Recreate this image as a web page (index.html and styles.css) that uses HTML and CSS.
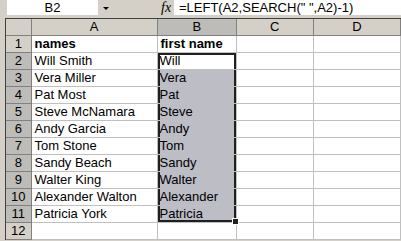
FILE: index.html
```html
<!DOCTYPE html>
<html lang="en">
<head>
    <title>names</title>
    <link rel="stylesheet" href="styles.css">
</head>

<body>
    <div class="formula_bar">
        <div class="name_box">B2</div>
        <div class="drop"></div>
        <div class="fx">fx</div>
        <div class="formula">=LEFT(A2,SEARCH(" ",A2)-1)</div>
    </div>

    <table class="sheet">
        <tr class="col_head">
            <th class="corner"></th>
            <th class="col_a">A</th>
            <th class="col_b on">B</th>
            <th class="col_c">C</th>
            <th class="col_d">D</th>
        </tr>
        <tr>
            <th class="row_head">1</th>
            <td class="bold">names</td>
            <td class="bold">first name</td>
            <td></td><td></td>
        </tr>
        <tr>
            <th class="row_head on">2</th>
            <td>Will Smith</td>
            <td class="sel active first">Will</td>
            <td></td><td></td>
        </tr>
        <tr>
            <th class="row_head on">3</th>
            <td>Vera Miller</td>
            <td class="sel">Vera</td>
            <td></td><td></td>
        </tr>
        <tr>
            <th class="row_head on">4</th>
            <td>Pat Most</td>
            <td class="sel">Pat</td>
            <td></td><td></td>
        </tr>
        <tr>
            <th class="row_head on">5</th>
            <td>Steve McNamara</td>
            <td class="sel">Steve</td>
            <td></td><td></td>
        </tr>
        <tr>
            <th class="row_head on">6</th>
            <td>Andy Garcia</td>
            <td class="sel">Andy</td>
            <td></td><td></td>
        </tr>
        <tr>
            <th class="row_head on">7</th>
            <td>Tom Stone</td>
            <td class="sel">Tom</td>
            <td></td><td></td>
        </tr>
        <tr>
            <th class="row_head on">8</th>
            <td>Sandy Beach</td>
            <td class="sel">Sandy</td>
            <td></td><td></td>
        </tr>
        <tr>
            <th class="row_head on">9</th>
            <td>Walter King</td>
            <td class="sel">Walter</td>
            <td></td><td></td>
        </tr>
        <tr>
            <th class="row_head on">10</th>
            <td>Alexander Walton</td>
            <td class="sel">Alexander</td>
            <td></td><td></td>
        </tr>
        <tr>
            <th class="row_head on">11</th>
            <td>Patricia York</td>
            <td class="sel last">Patricia<span class="handle"></span></td>
            <td></td><td></td>
        </tr>
        <tr>
            <th class="row_head">12</th>
            <td></td><td></td><td></td><td></td>
        </tr>
    </table>
</body>

</html>
```

FILE: styles.css
```css
body {
    font-family: "Liberation Sans", Arial, sans-serif;
    font-size: 13px;
    background-color: #d4d0c8;
    margin: 0;
    overflow: hidden;
}

.formula_bar {
    display: flex;
    align-items: flex-start;
    height: 18px;
}

.name_box {
    margin-left: 7px;
    width: 91px;
    height: 15px;
    line-height: 16px;
    background-color: white;
    text-align: center;
}

.drop {
    width: 0;
    height: 0;
    margin-top: 7px;
    margin-left: 5px;
    border-left: 3px solid transparent;
    border-right: 3px solid transparent;
    border-top: 3px solid black;
}

.fx {
    margin-left: 52px;
    width: 13px;
    font-family: "Liberation Serif", serif;
    font-style: italic;
    font-size: 14px;
    line-height: 16px;
}

.formula {
    flex: 1;
    padding-left: 5px;
    height: 15px;
    line-height: 16px;
    background-color: white;
    white-space: nowrap;
}

.sheet {
    margin-left: 5px;
    border-collapse: separate;
    border-spacing: 0;
    border-top: 1px solid #404040;
    border-left: 1px solid #404040;
    background-color: white;
    table-layout: fixed;
}

.sheet th, .sheet td {
    height: 16px;
    padding: 0;
    line-height: 16px;
    white-space: nowrap;
    overflow: hidden;
}

.sheet td {
    padding-left: 3px;
    border-right: 1px solid #c0c0c0;
    border-bottom: 1px solid #c0c0c0;
}

.sheet th {
    font-weight: normal;
    text-align: center;
    background-color: #d4d0c8;
    border-right: 1px solid #808080;
    border-bottom: 1px solid #808080;
}

.corner { width: 25px; }
.col_a { width: 126px; }
.col_b { width: 79px; }
.col_c { width: 79px; }
.col_d { width: 90px; }

.sheet th.on {
    background-color: #bebcb8;
}

.bold {
    font-weight: bold;
}

.sheet td.sel {
    background-color: #bdbdc6;
    box-shadow: inset 2px 0 #202020, inset -2px 0 #202020;
    padding-left: 2px;
}

.sheet td.active {
    background-color: white;
}

.sheet td.first {
    box-shadow: inset 2px 0 #202020, inset -2px 0 #202020, inset 0 2px #202020;
}

.sheet td.last {
    position: relative;
    overflow: visible;
    box-shadow: inset 2px 0 #202020, inset -2px 0 #202020, inset 0 -2px #202020;
}

.handle {
    position: absolute;
    right: -3px;
    bottom: -3px;
    width: 5px;
    height: 5px;
    background-color: #202020;
    border: 1px solid white;
}
```
